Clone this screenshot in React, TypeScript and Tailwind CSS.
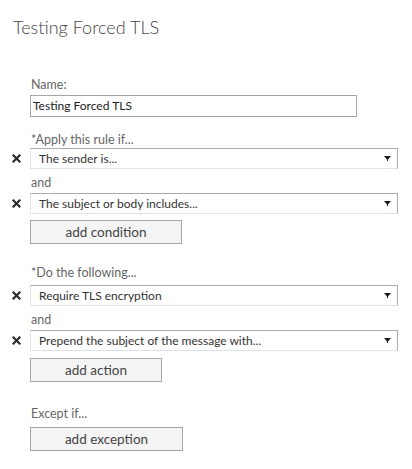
import React from 'react';

const font = { fontFamily: 'Lato, "Open Sans", Arial, sans-serif' };

const RemoveIcon = () => (
  <svg width="9" height="9" viewBox="0 0 9 9" className="shrink-0">
    <path d="M1.5 1.5 L7.5 7.5 M7.5 1.5 L1.5 7.5" stroke="#2b2b2b" strokeWidth="2.2" strokeLinecap="square" />
  </svg>
);

const Caret = () => (
  <svg width="7" height="5" viewBox="0 0 7 5">
    <path d="M0 0 H7 L4 3.5 V5 H3 V3.5 Z" fill="#1a1a1a" />
  </svg>
);

const Label = ({ children, className = '' }: { children: React.ReactNode; className?: string }) => (
  <div className={`pl-[31px] text-[12.5px] leading-[16px] text-[#666] ${className}`}>{children}</div>
);

const Condition = ({ text }: { text: string }) => (
  <div className="flex items-center">
    <div className="w-[30px] flex justify-center pl-[3px]">
      <RemoveIcon />
    </div>
    <div className="w-[368px] h-[21px] flex items-center justify-between border-t border-r border-t-[#ababab] border-r-[#ababab] border-l border-b border-l-[#e2e6eb] border-b-[#dde3ea] bg-white pl-[8px] pr-[6px]">
      <span className="text-[12px] text-[#333]">{text}</span>
      <Caret />
    </div>
  </div>
);

const AddButton = ({ text, width }: { text: string; width: string }) => (
  <div className="pl-[30px]">
    <button className={`${width} h-[24px] bg-[#f4f4f4] border border-[#a6a6a6] text-[13.5px] text-[#444] flex items-center justify-center`}>
      {text}
    </button>
  </div>
);

export default function App() {
  return (
    <div className="w-[412px] h-[469px] bg-white overflow-hidden" style={font}>
      <h1 className="pl-[13px] pt-[13px] text-[18px] leading-[28px] font-light text-[#444]">Testing Forced TLS</h1>

      <Label className="mt-[36px]">Name:</Label>
      <div className="pl-[30px] mt-[2px]">
        <div className="w-[327px] h-[22px] border border-[#a6a6a6] flex items-center pl-[2px] text-[12px] text-[#222]">
          Testing Forced TLS
        </div>
      </div>

      <Label className="mt-[15px]">*Apply this rule if...</Label>
      <Condition text="The sender is..." />
      <Label className="mt-[6px]">and</Label>
      <div className="mt-[2px]">
        <Condition text="The subject or body includes..." />
      </div>
      <div className="mt-[6px]">
        <AddButton text="add condition" width="w-[152px]" />
      </div>

      <Label className="mt-[21px]">*Do the following...</Label>
      <div className="mt-[4px]">
        <Condition text="Require TLS encryption" />
      </div>
      <Label className="mt-[6px]">and</Label>
      <div className="mt-[2px]">
        <Condition text="Prepend the subject of the message with..." />
      </div>
      <div className="mt-[7px]">
        <AddButton text="add action" width="w-[132px]" />
      </div>

      <Label className="mt-[24px]">Except if...</Label>
      <div className="mt-[5px]">
        <AddButton text="add exception" width="w-[153px]" />
      </div>
    </div>
  );
}
